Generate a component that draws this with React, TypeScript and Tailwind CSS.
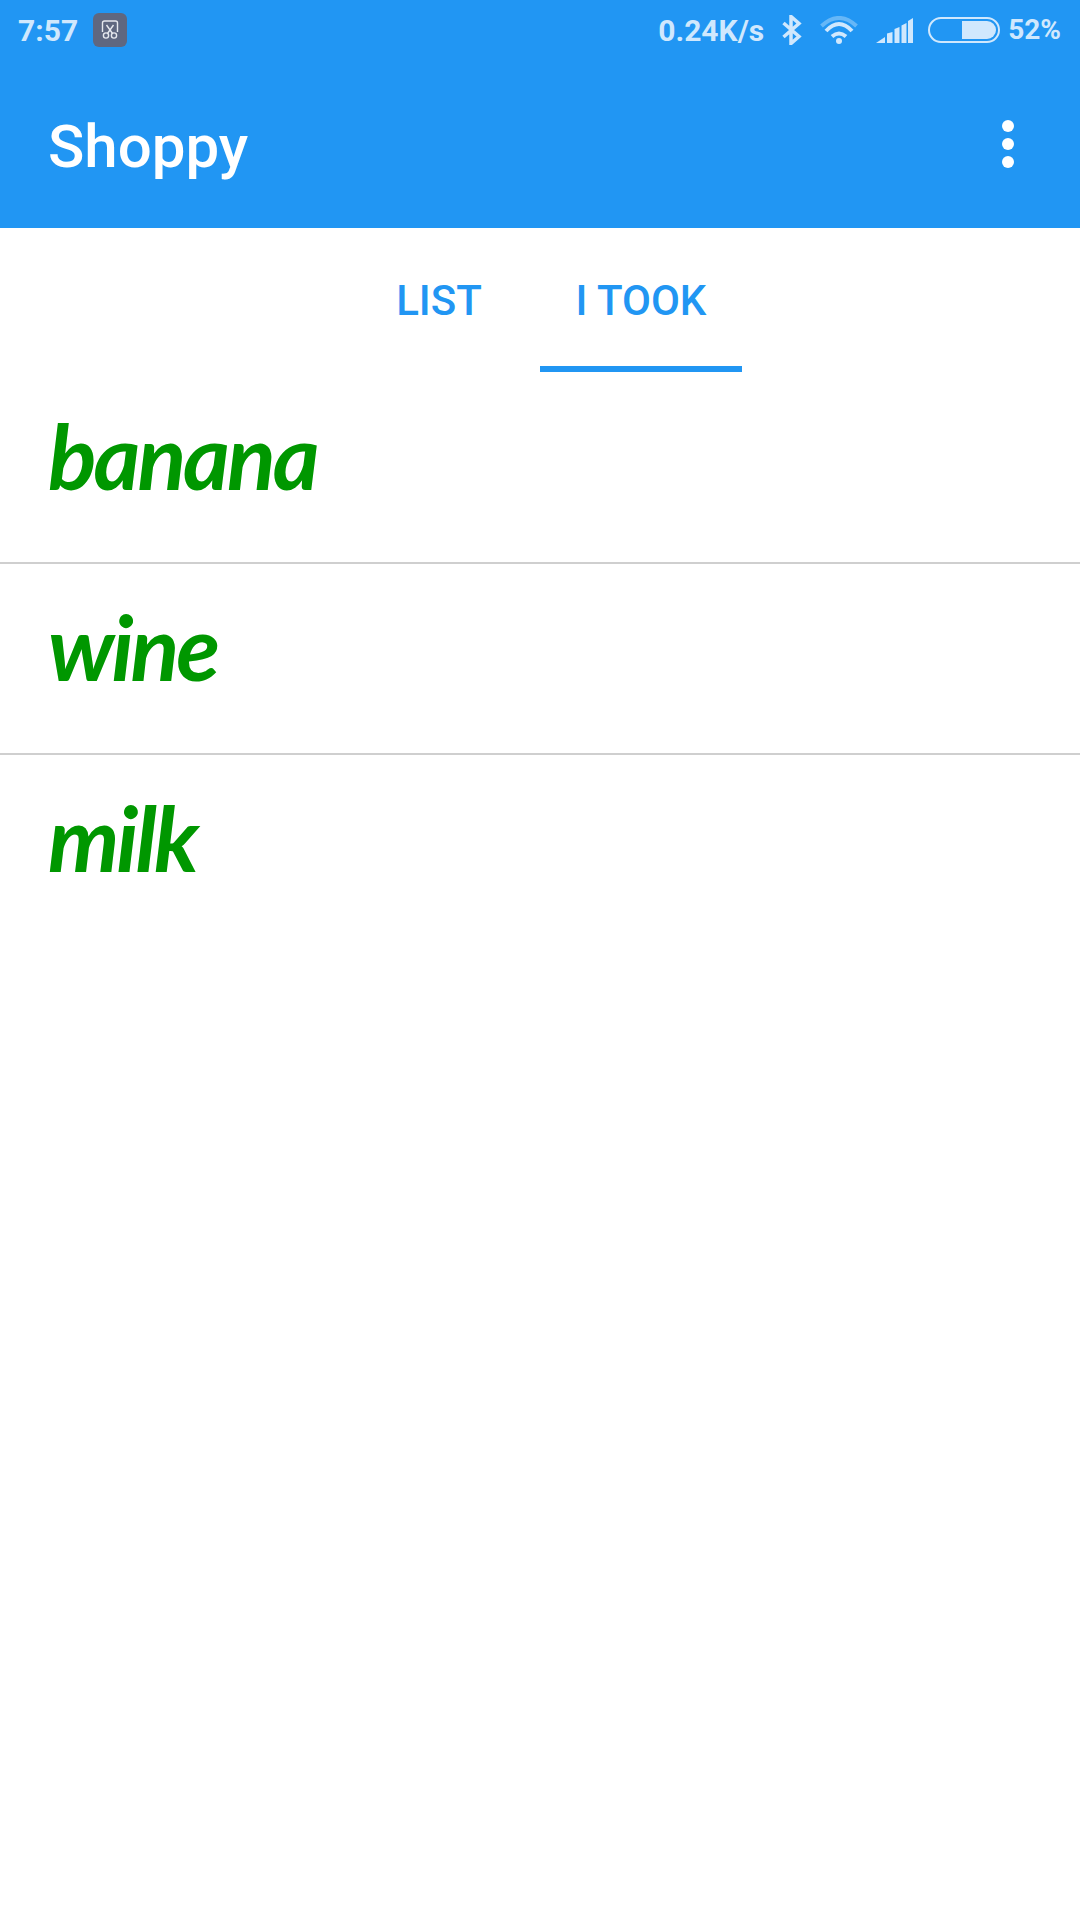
const items = ["banana", "wine", "milk"];

const ScissorsBadge = () => (
  <div className="ml-[15px] flex size-[34px] items-center justify-center rounded-[6px] bg-[#5f6780]">
    <svg width="26" height="26" viewBox="0 0 26 26" fill="none" stroke="#e6e8ee" strokeWidth="1.4">
      <path d="M5.5 15V6A2 2 0 0 1 7.5 4H18.5A2 2 0 0 1 20.5 6V15" />
      <path d="M9.5 8L15.5 16.5M16.5 8L10.5 16.5" />
      <circle cx="9" cy="18.5" r="2.6" />
      <circle cx="17" cy="18.5" r="2.6" />
    </svg>
  </div>
);

const Bluetooth = () => (
  <svg className="ml-[18px]" width="20" height="30" viewBox="0 0 20 30" fill="none" stroke="#d0e8fd" strokeWidth="3.5">
    <path d="M1.5 8L17 21.5L9 28.5V1.5L17 8.5L1.5 22" />
  </svg>
);

const Wifi = () => (
  <svg className="ml-[18px]" width="38" height="28" viewBox="0 0 38 28" fill="none" stroke="#d0e8fd" strokeWidth="4">
    <path d="M1.5 10Q19 -6 36.5 10" strokeOpacity="0.4" />
    <path d="M6 15Q19 1 32 15" />
    <path d="M12 20.5Q19 14.5 26 20.5" />
    <circle cx="19" cy="25" r="3" fill="#d0e8fd" stroke="none" />
  </svg>
);

const Signal = () => (
  <svg className="ml-[18px]" width="37" height="25" viewBox="0 0 37 25" fill="#d0e8fd">
    <path d="M0 25L9 19V25Z" />
    <path d="M11 25V15.5L16.5 14V25Z" />
    <path d="M18.5 25V11L23.5 9V25Z" />
    <path d="M25.5 25V7.5L30.5 5V25Z" />
    <path d="M32 25V3L37 0V25Z" />
  </svg>
);

const Battery = () => (
  <div className="ml-[15px] flex h-[26px] w-[72px] justify-end rounded-[13px] border-2 border-[#d0e8fd] p-[2px]">
    <div className="h-full w-[34px] rounded-r-[9px] bg-[#d0e8fd]" />
  </div>
);

export default function App() {
  return (
    <div className="min-h-[1920px] bg-white font-['Roboto',sans-serif]">
      <header className="h-[228px] bg-[#2196f3]">
        <div className="flex h-[60px] items-center pl-[18px] pr-[19px] text-[#d0e8fd]">
          <span className="pt-[1px] text-[30px] font-bold leading-none">7:57</span>
          <ScissorsBadge />
          <span className="ml-auto pt-[1px] text-[30px] font-bold leading-none">0.24K/s</span>
          <Bluetooth />
          <Wifi />
          <Signal />
          <Battery />
          <span className="ml-[8px] text-[28px] font-bold leading-none">52%</span>
        </div>
        <div className="flex h-[168px] items-start justify-between pl-[48px] pr-[66px] pt-[45px]">
          <h1 className="text-[60px] font-medium leading-[84px] text-white">Shoppy</h1>
          <div className="mt-[15px] flex flex-col gap-[6px]">
            <span className="size-[12px] rounded-full bg-white" />
            <span className="size-[12px] rounded-full bg-white" />
            <span className="size-[12px] rounded-full bg-white" />
          </div>
        </div>
      </header>

      <nav className="flex h-[144px] justify-center text-[42px] font-medium text-[#2196f3]">
        <div className="flex w-[202px] items-center justify-center border-y-[6px] border-transparent">LIST</div>
        <div className="flex w-[202px] items-center justify-center border-y-[6px] border-t-transparent border-b-[#2196f3]">
          I TOOK
        </div>
      </nav>

      <ul className="pt-[1px]">
        {items.map((item) => (
          <li
            key={item}
            className="flex h-[191px] items-start border-b-2 border-[#cfcfcf] pl-[48px] pt-[22px] last:border-b-0"
          >
            <span className="font-['Lato',sans-serif] text-[90px] font-bold italic leading-[120px] tracking-[-3px] text-[#009700]">
              {item}
            </span>
          </li>
        ))}
      </ul>
    </div>
  );
}
